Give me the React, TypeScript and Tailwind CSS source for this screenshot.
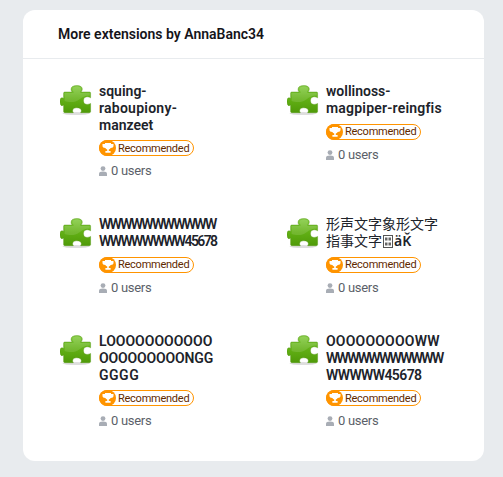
import React from "react";

function Puzzle({ id }: { id: string }) {
  return (
    <svg width="32" height="32" viewBox="0 0 32 32" className="shrink-0">
      <defs>
        <linearGradient id={id} x1="0" y1="0" x2="0" y2="1">
          <stop offset="0" stopColor="#86cc45" />
          <stop offset="0.5" stopColor="#62b015" />
          <stop offset="1" stopColor="#4f9a08" />
        </linearGradient>
      </defs>
      <ellipse cx="16" cy="28.6" rx="13.5" ry="1.5" fill="#000" opacity="0.13" />
      <path
        d="M12.2 7 C10.6 5.6 10.6 2.8 12.6 1.4 C15 .2 19.6 .3 21.4 1.9 C22.8 3.4 22.4 5.6 21 7 L29.5 7 C30.3 7 30.6 7.5 30.6 8.1 L30.6 12.8 C29 11.6 26.3 11.4 24.8 12.4 C23 13.6 23 17.6 24.8 18.8 C26.3 19.8 29 19.5 30.6 18.4 L30.6 26.6 C30.6 27.3 30.1 27.7 29.5 27.7 L20.6 27.7 C21.8 26.2 21.6 24.4 20 23.4 C18.2 22.4 14.6 22.6 13.4 23.8 C12.2 25 12.4 26.6 13.4 27.7 L4.8 27.7 C4 27.7 3.6 27.2 3.6 26.6 L3.6 20 C2.4 21 1 20.8 .5 19.4 C-.2 17.6 -.2 15 .6 13.6 C1.3 12.4 2.6 12.4 3.6 13.6 L3.6 8.1 C3.6 7.5 4.1 7 4.8 7 Z"
        fill={`url(#${id})`}
        stroke="#4a9106"
        strokeWidth="0.4"
      />
      <path
        d="M4.6 8 L13 8 C13.8 8 14 7.4 13.4 6.5 C12.2 5 12.2 3.2 13.6 2.3 C15.4 1.3 19 1.4 20.4 2.6 C21.4 3.8 21 5.2 20.2 6.5 C19.7 7.4 20 8 20.8 8 L29.6 8 L29.6 10.5 C26 10.2 23 11.5 20 14 C15 18 9 17.5 4.6 16 Z"
        fill="#fff"
        opacity="0.12"
      />
    </svg>
  );
}

function Badge() {
  return (
    <div className="flex h-[16px] w-[95px] items-center rounded-full border border-[#ff9400] bg-white">
      <span className="-ml-px flex h-[16px] w-[17px] shrink-0 items-center justify-center rounded-full bg-[#ff9400]">
        <svg width="12" height="12" viewBox="0 0 12 12">
          <path d="M3 1 H9 V2 H11.5 V4 C11.5 5.2 10.4 6 8.7 6 C8.2 6.8 7.5 7.2 6.8 7.4 V9 H8.6 V10.8 H3.4 V9 H5.2 V7.4 C4.5 7.2 3.8 6.8 3.3 6 C1.6 6 .5 5.2 .5 4 V2 H3 Z" fill="#fff" />
        </svg>
      </span>
      <span className="ml-[2px] text-[11px] leading-none tracking-[-0.25px] text-[#5f2a00]">Recommended</span>
    </div>
  );
}

function Tofu() {
  return (
    <svg width="10" height="13" viewBox="0 0 10 13" className="mx-[1px] inline-block align-[-2px]">
      <rect x="0.5" y="0.5" width="9" height="12" fill="none" stroke="#555" strokeWidth="1" />
      <path d="M2 2.5 H4.5 V5.5 H2 Z M5.5 2.5 H8 V5.5 H5.5 Z M2 7.5 H4.5 V10.5 H2 Z M5.5 7.5 H8 V10.5 H5.5 Z" fill="#666" />
    </svg>
  );
}

type Line = { text: React.ReactNode; cls?: string };

function Item({ id, lines, cjk }: { id: string; lines: Line[]; cjk?: boolean }) {
  return (
    <div className="flex items-start gap-[7px]">
      <div className="pt-[2px]">
        <Puzzle id={id} />
      </div>
      <div className="flex flex-col">
        <div className={`text-[14px] leading-[16.8px] text-[#20232a] ${cjk ? "font-normal" : "font-semibold"}`}>
          {lines.map((l, i) => (
            <div key={i} className={`whitespace-nowrap ${l.cls ?? ""}`}>{l.text}</div>
          ))}
        </div>
        <div className="mt-[7px]">
          <Badge />
        </div>
        <div className="mt-[7px] flex items-center gap-[4px] text-[13px] leading-[16px] tracking-[-0.3px] text-[#5b5f69]">
          <svg width="8" height="10" viewBox="0 0 8 10">
            <circle cx="4" cy="2.6" r="2.4" fill="#a8adb5" />
            <path d="M0 10 V7.6 C0 6.2 1.4 5.4 4 5.4 C6.6 5.4 8 6.2 8 7.6 V10 Z" fill="#a8adb5" />
          </svg>
          <span>0 users</span>
        </div>
      </div>
    </div>
  );
}

export default function App() {
  return (
    <div
      className="min-h-[477px] bg-[#e8ebee] pt-[10px] pl-[23px] pr-[19px] pb-[16px]"
      style={{ fontFamily: 'Roboto, "Noto Sans CJK SC", sans-serif' }}
    >
      <div className="h-[451px] rounded-[12px] bg-white">
        <div className="flex h-[49px] items-center border-b border-[#e8ebee] pl-[35px] text-[14px] font-semibold text-[#15141a]">
          More extensions by AnnaBanc34
        </div>
        <div className="grid grid-cols-[227px_1fr] gap-y-[37px] pl-[37px] pt-[24px]">
          <Item
            id="p1"
            lines={[
              { text: "squing-" },
              { text: "raboupiony-", cls: "tracking-[0.25px]" },
              { text: "manzeet" },
            ]}
          />
          <Item
            id="p2"
            lines={[{ text: "wollinoss-" }, { text: "magpiper-reingfis", cls: "tracking-[0.2px]" }]}
          />
          <Item
            id="p3"
            lines={[
              { text: "WWWWWWWWWWW", cls: "tracking-[-1.7px]" },
              { text: "WWWWWWWW45678", cls: "tracking-[-1.6px]" },
            ]}
          />
          <Item
            id="p4"
            cjk
            lines={[
              { text: "形声文字象形文字" },
              {
                text: (
                  <>
                    指事文字
                    <Tofu />
                    <span className="font-semibold" style={{ fontFamily: '"Noto Sans", sans-serif' }}>äǨ</span>
                  </>
                ),
              },
            ]}
          />
          <Item
            id="p5"
            lines={[
              { text: "LOOOOOOOOOOO" },
              { text: "OOOOOOOOONGG", cls: "tracking-[-0.15px]" },
              { text: "GGGG", cls: "tracking-[0.5px]" },
            ]}
          />
          <Item
            id="p6"
            lines={[
              { text: "OOOOOOOOOWW", cls: "tracking-[0.2px]" },
              { text: "WWWWWWWWWWW", cls: "tracking-[-1.7px]" },
              { text: "WWWWW45678", cls: "tracking-[-0.6px]" },
            ]}
          />
        </div>
      </div>
    </div>
  );
}
